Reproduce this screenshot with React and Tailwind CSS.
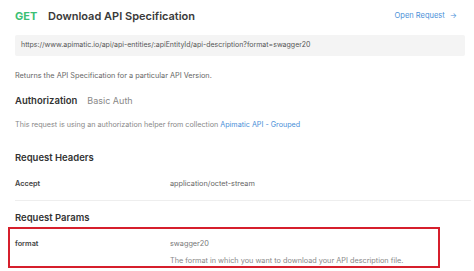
import React from "react";

function SectionTitle({ children }) {
  return (
    <h2 className="text-[9.5px] font-semibold text-[#333]">{children}</h2>
  );
}

export default function App() {
  const url =
    "https://www.apimatic.io/api/api-entities/:apiEntityId/api-description?format=swagger20";

  return (
    <div
      className="w-[474px] h-[271px] overflow-hidden bg-white relative"
      style={{ fontFamily: "Inter, 'Noto Sans', sans-serif" }}
    >
      <div className="px-[15px] pt-[9px]">
        <div className="flex items-center h-[14px]">
          <span className="text-[11px] font-bold text-[#3bbf74] w-[33px]">
            GET
          </span>
          <span className="text-[11px] font-semibold text-[#3a3a3a]">
            Download API Specification
          </span>
          <span className="ml-auto mr-[2px] text-[7.5px] text-[#4a8fd8]">
            Open Request <span className="ml-[3px]">&rarr;</span>
          </span>
        </div>

        <div className="mt-[12px] h-[21px] bg-[#f4f4f4] rounded-[2px] flex items-center px-[6px] text-[7px] text-[#555] mr-[-6px]">
          {url}
        </div>

        <p className="mt-[15px] text-[7.3px] text-[#666]">
          Returns the API Specification for a particular API Version.
        </p>

        <div className="mt-[12px] flex items-baseline gap-[10px]">
          <SectionTitle>Authorization</SectionTitle>
          <span className="text-[9px] text-[#888]">Basic Auth</span>
        </div>
        <p className="mt-[12px] text-[7.2px] text-[#888]">
          This request is using an authorization helper from collection{" "}
          <span className="text-[#4a8fd8]">Apimatic API - Grouped</span>
        </p>

        <div className="mt-[20px]">
          <SectionTitle>Request Headers</SectionTitle>
        </div>
        <div className="mt-[14px] flex items-center pb-[10px] border-b border-[#eee] mr-[-12px] text-[7.3px]">
          <span className="w-[155px] font-semibold text-[#444]">Accept</span>
          <span className="text-[#666]">application/octet-stream</span>
        </div>

        <div className="mt-[10px]">
          <SectionTitle>Request Params</SectionTitle>
        </div>
        <div className="mt-[14px] text-[7.3px]">
          <div className="flex items-center">
            <span className="w-[155px] font-semibold text-[#444]">format</span>
            <span className="text-[#777]">swagger20</span>
          </div>
          <div className="mt-[6px] pl-[155px] text-[#888]">
            The format in which you want to download your API description file.
          </div>
        </div>
      </div>

      <div className="absolute left-[8px] top-[227px] w-[432px] h-[41px] border-2 border-[#d61f2c] pointer-events-none" />
    </div>
  );
}
